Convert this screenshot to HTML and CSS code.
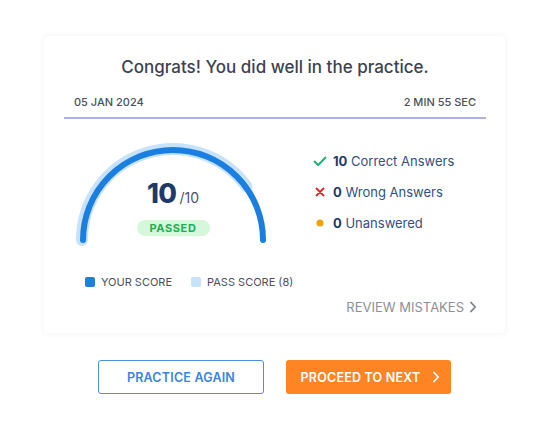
FILE: index.html
```html
<!DOCTYPE html>
<html>
<head>
<meta charset="utf-8">
<link rel="stylesheet" href="styles.css">
</head>
<body>
<div class="page">
  <div class="card">
    <h1 class="title">Congrats! You did well in the practice.</h1>
    <div class="meta">
      <span>05 JAN 2024</span>
      <span>2 MIN 55 SEC</span>
    </div>
    <div class="result">
      <div class="gauge">
        <svg class="gauge-svg" width="200" height="112" viewBox="0 0 200 112">
          <path d="M 9 102 A 91 91 0 0 1 173.6 48.5" fill="none" stroke="#c7e2fa" stroke-width="12" stroke-linecap="round"/>
          <path d="M 10 102 A 90 90 0 0 1 190 102" fill="none" stroke="#1a7fe0" stroke-width="6" stroke-linecap="round"/>
        </svg>
        <div class="gauge-center">
          <div class="score"><span class="score-big">10</span><span class="score-total">/10</span></div>
          <div class="pill">PASSED</div>
        </div>
      </div>
      <ul class="stats">
        <li class="stat">
          <svg class="ico" width="14" height="14" viewBox="0 0 14 14"><path d="M1.5 7.5 L5.2 11 L12.5 3.5" fill="none" stroke="#19b26b" stroke-width="1.8" stroke-linecap="round" stroke-linejoin="round"/></svg>
          <span><b>10</b> Correct Answers</span>
        </li>
        <li class="stat">
          <svg class="ico" width="14" height="14" viewBox="0 0 14 14"><path d="M3.5 3.5 L10.5 10.5 M10.5 3.5 L3.5 10.5" fill="none" stroke="#e0282a" stroke-width="1.8" stroke-linecap="round"/></svg>
          <span><b>0</b> Wrong Answers</span>
        </li>
        <li class="stat">
          <svg class="ico" width="14" height="14" viewBox="0 0 14 14"><circle cx="7" cy="7" r="3.6" fill="#e6a800"/></svg>
          <span><b>0</b> Unanswered</span>
        </li>
      </ul>
    </div>
    <div class="legend">
      <span class="legend-item"><i class="sq sq-dark"></i>YOUR SCORE</span>
      <span class="legend-item"><i class="sq sq-light"></i>PASS SCORE (8)</span>
    </div>
    <div class="review-row">
      <a class="review">REVIEW MISTAKES
        <svg width="8" height="12" viewBox="0 0 8 12"><path d="M2 1.5 L6.2 6 L2 10.5" fill="none" stroke="#7d828b" stroke-width="1.8" stroke-linecap="round" stroke-linejoin="round"/></svg>
      </a>
    </div>
  </div>
  <div class="actions">
    <button class="btn btn-outline">PRACTICE AGAIN</button>
    <button class="btn btn-primary">PROCEED TO NEXT
      <svg width="8" height="12" viewBox="0 0 8 12"><path d="M2 1.5 L6.2 6 L2 10.5" fill="none" stroke="#ffffff" stroke-width="1.8" stroke-linecap="round" stroke-linejoin="round"/></svg>
    </button>
  </div>
</div>
</body>
</html>
```

FILE: styles.css
```css
* { box-sizing: border-box; }
html, body { margin: 0; padding: 0; background: #ffffff; }
body { font-family: Inter, "Noto Sans", sans-serif; color: #3c4250; }

.page { padding-top: 36px; }

.card {
  margin-left: 44px;
  width: 461px;
  padding: 20px 19px 18px 20px;
  background: #ffffff;
  border-radius: 4px;
  box-shadow: 0 0 6px rgba(60, 70, 140, 0.08);
}

.title {
  margin: 0;
  font-size: 17px;
  line-height: 22px;
  font-weight: 500;
  text-align: center;
  color: #3d4250;
}

.meta {
  margin-top: 17px;
  display: flex;
  justify-content: space-between;
  padding: 0 10px 8px 10px;
  font-size: 11px;
  line-height: 14px;
  font-weight: 500;
  color: #4a4f5e;
  border-bottom: 2px solid #aeb2ec;
}

.result {
  display: flex;
  padding-top: 19px;
}

.gauge {
  position: relative;
  width: 200px;
  height: 112px;
  margin-left: 9px;
}
.gauge-svg { display: block; }

.gauge-center {
  position: absolute;
  left: 0;
  right: 0;
  top: 40px;
  display: flex;
  flex-direction: column;
  align-items: center;
}

.score { display: flex; align-items: baseline; }
.score-big {
  font-size: 27px;
  line-height: 32px;
  font-weight: 800;
  color: #1d3a6b;
  letter-spacing: -0.5px;
}
.score-total {
  font-size: 14px;
  color: #4a5263;
  margin-left: 3px;
}

.pill {
  margin-top: 10px;
  width: 73px;
  height: 16px;
  border-radius: 8px;
  background: #d6f8da;
  color: #1fae57;
  font-size: 11px;
  line-height: 16px;
  font-weight: 700;
  text-align: center;
  letter-spacing: 0.6px;
}

.stats {
  list-style: none;
  margin: 0 0 0 40px;
  padding: 13px 0 0 0;
  display: flex;
  flex-direction: column;
  gap: 11px;
}
.stat {
  display: flex;
  align-items: center;
  gap: 6px;
  height: 20px;
  font-size: 13px;
  color: #33507f;
}
.stat b { color: #1f3a68; font-weight: 700; }
.ico { display: block; }

.legend {
  margin-top: 25px;
  margin-left: 21px;
  display: flex;
  gap: 19px;
  font-size: 11px;
  line-height: 14px;
  color: #4a4f5e;
}
.legend-item { display: flex; align-items: center; gap: 6px; }
.sq { display: inline-block; width: 10px; height: 10px; border-radius: 2px; }
.sq-dark { background: #1a7fe0; }
.sq-light { background: #c7e2fa; }

.review-row {
  margin-top: 10px;
  display: flex;
  justify-content: flex-end;
  padding-right: 9px;
}
.review {
  display: flex;
  align-items: center;
  gap: 5px;
  font-size: 13px;
  line-height: 16px;
  color: #8b9098;
}
.review svg { display: block; }

.actions {
  margin-top: 27px;
  display: flex;
  justify-content: center;
  gap: 22px;
  padding-right: 2px;
}
.btn {
  height: 34px;
  width: 166px;
  border-radius: 3px;
  font-family: Inter, "Noto Sans", sans-serif;
  font-size: 12.5px;
  font-weight: 600;
  letter-spacing: 0.2px;
  display: flex;
  align-items: center;
  justify-content: center;
  gap: 12px;
  padding: 0;
}
.btn-outline {
  background: #ffffff;
  border: 1px solid #4c8fe2;
  color: #3a84de;
}
.btn-primary {
  width: 165px;
  background: #ff8424;
  border: none;
  color: #ffffff;
  padding-left: 4px;
}
.btn-primary svg { display: block; }
```
